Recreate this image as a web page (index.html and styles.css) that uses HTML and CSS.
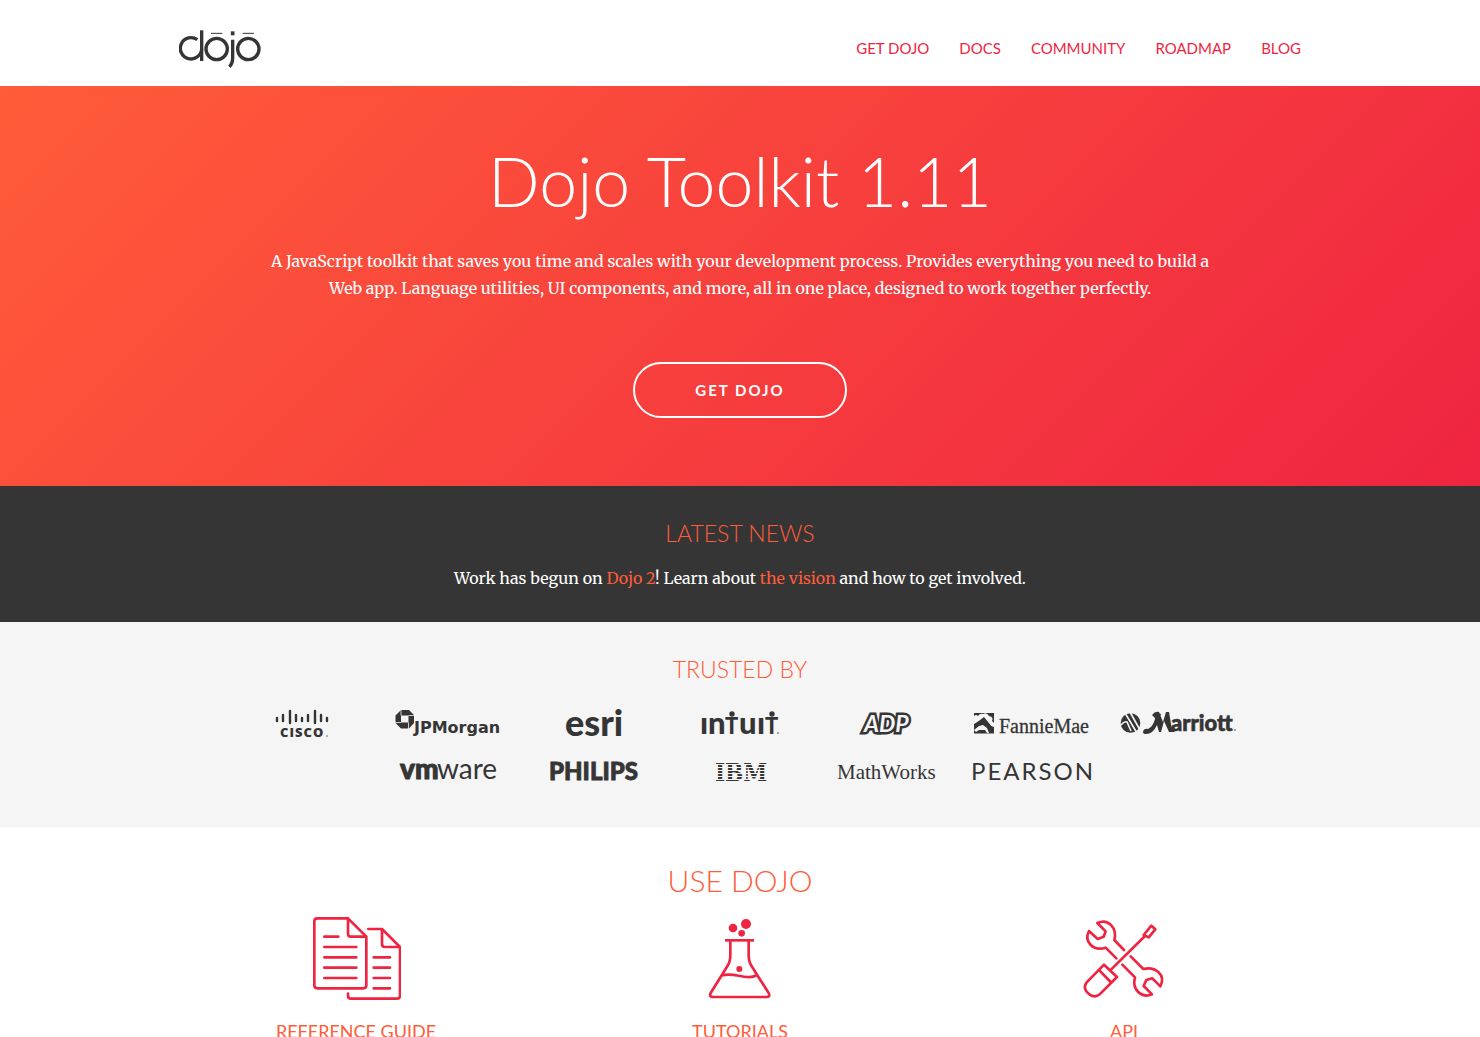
FILE: index.html
```html
<!DOCTYPE html>
<html lang="en">
<head>
    <meta charset="UTF-8">
    <meta name="viewport" content="width=device-width, initial-scale=1">
    <title>Dojo Toolkit</title>
    <link rel="stylesheet" href="styles.css">
</head>
<body>

    <header class="header">
        <div class="container header-inner">
            <a class="logo" href="#" aria-label="Dojo">
                <svg width="84" height="40" viewBox="57 42 252 120" fill="none" stroke="#353535" stroke-width="10">
                    <path d="M112 74A32 32 0 1 0 125 102"/>
                    <path d="M125 46V138"/>
                    <circle cx="170" cy="102" r="32"/>
                    <circle cx="265" cy="102" r="32"/>
                    <path d="M218 74V128Q218 146 208 155"/>
                    <path d="M218 49V61" stroke-width="11"/>
                    <path d="M153 55H187M248 55H282" stroke-width="3"/>
                </svg>
            </a>
            <nav class="nav">
                <a href="#">GET DOJO</a>
                <a href="#">DOCS</a>
                <a href="#">COMMUNITY</a>
                <a href="#">ROADMAP</a>
                <a href="#">BLOG</a>
            </nav>
        </div>
    </header>

    <section class="hero">
        <h1>Dojo Toolkit 1.11</h1>
        <p>A JavaScript toolkit that saves you time and scales with your development process. Provides everything you need to build a Web app. Language utilities, UI components, and more, all in one place, designed to work together perfectly.</p>
        <a class="btn" href="#">GET DOJO</a>
    </section>

    <section class="news">
        <h2>LATEST NEWS</h2>
        <p>Work has begun on <a href="#">Dojo 2</a>! Learn about <a href="#">the vision</a> and how to get involved.</p>
    </section>

    <section class="trusted">
        <h2>TRUSTED BY</h2>
        <div class="brands">
            <!-- cisco -->
            <svg class="brand" viewBox="0 0 146 48">
                <path d="M48 19V22M54 16V22M61 12V24M67 16V22M73 19V22M79 16V22M86 12V24M92 16V22M98 19V22" stroke="#353535" stroke-width="2.4" stroke-linecap="round"/>
                <text class="cisco" x="51" y="38">CISCO</text>
                <circle cx="98" cy="37" r=".7"/>
            </svg>
            <!-- jpmorgan -->
            <svg class="brand" viewBox="0 0 146 48">
                <path d="M26 11L20.500 16.500V24L26 29.500H34L39 24V16L34 11ZM26 16.500H33.500V23.500H26Z" fill-rule="evenodd"/>
                <path d="M26 10V16.500M40 16.500H33.500M33.500 30V23.500M20 23.500H26" stroke="#f5f5f5" stroke-width=".8"/>
                <text class="jpmorgan" x="39" y="34">JPMorgan</text>
            </svg>
            <!-- esri -->
            <svg class="brand" viewBox="0 0 146 48">
                <text class="esri" x="44" y="37">esri</text>
            </svg>
            <!-- intuit -->
            <svg class="brand" viewBox="0 0 146 48">
                <text class="intuit" y="35"><tspan x="33">ı</tspan><tspan x="41">n</tspan><tspan class="intuit-t" x="58">T</tspan><tspan x="72">u</tspan><tspan x="90">ı</tspan><tspan class="intuit-t" x="98">T</tspan></text>
                <circle cx="65" cy="15" r="2.700"/>
                <circle cx="105" cy="15" r="2.700"/>
                <circle cx="111" cy="34" r=".8"/>
            </svg>
            <!-- adp -->
            <svg class="brand" viewBox="0 0 146 48">
                <text class="adp" x="51" y="33">ADP</text>
            </svg>
            <!-- fannie mae -->
            <svg class="brand" viewBox="0 0 146 48">
                <rect x="15" y="14" width="20" height="20.500"/>
                <path d="M15 17Q17 15 19 17Q21 14 24 15Q28 13 30 17Q35 18 33 22L35 24V28L32 27L26 20L22 21L15 25Z" fill="#f5f5f5"/>
                <path d="M16 25L25 18L33 28L30 29L25 24L19 27Z"/>
                <path d="M15 31L20 27L24 26L28 29L30 34H28L26 31H20L17 33Z" fill="#f5f5f5"/>
                <text class="fannie" x="40" y="34">FannieMae</text>
            </svg>
            <!-- marriott -->
            <svg class="brand" viewBox="0 0 146 48">
                <circle cx="25.500" cy="24" r="9.800"/>
                <path d="M20 14L32 34M25 13L35 31M16 26Q19 22 22 23L26 32" fill="none" stroke="#f5f5f5" stroke-width="1.600"/>
                <path d="M38 33Q39 29 43 30Q47 28 49 23L52 14L56 15L52 26Q48 35 41 35Q38 35 38 33Z"/>
                <path d="M47 16Q50 12 54 13L58 23L61 13H64L67 31H71L69 33H64L59 22L56 33H54L50 19Z"/>
                <text class="marriott" x="66" y="32">arriott</text>
                <circle cx="130" cy="31" r=".8"/>
            </svg>
            <!-- vmware -->
            <svg class="brand" viewBox="0 0 146 48">
                <text class="vmware" y="32"><tspan class="vm" x="25">vm</tspan><tspan x="62">ware</tspan></text>
            </svg>
            <!-- philips -->
            <svg class="brand" viewBox="0 0 146 48">
                <text class="philips" x="28" y="33">PHILIPS</text>
            </svg>
            <!-- ibm -->
            <svg class="brand" viewBox="0 0 146 48">
                <text class="ibm" x="48" y="34">IBM</text>
                <path d="M46 17.500H100M46 20.500H100M46 23.500H100M46 26.500H100M46 29.500H100M46 32.500H100" stroke="#f5f5f5" stroke-width="1"/>
            </svg>
            <!-- mathworks -->
            <svg class="brand" viewBox="0 0 146 48">
                <text class="mathworks" x="24" y="32">MathWorks</text>
            </svg>
            <!-- pearson -->
            <svg class="brand" viewBox="0 0 146 48">
                <text class="pearson" x="12" y="33">PEARSON</text>
            </svg>
        </div>
    </section>

    <section class="use">
        <h2>USE DOJO</h2>
        <div class="container use-list">
            <a class="use-item" href="#">
                <svg class="use-icon" viewBox="123 48 270 252">
                    <path d="M234 55H142Q133 55 133 64V256Q133 265 142 265H280Q289 265 289 256V110ZM234 55V101Q234 110 243 110H289"/>
                    <path d="M163 110H205M163 141H259M163 172H259M163 203H259M163 234H259"/>
                    <path d="M295 87H336L390 141V287Q390 296 381 296H243Q234 296 234 287V281M336 87V132Q336 141 345 141H390"/>
                    <path d="M311 172H360M311 203H360M311 234H360M311 265H360"/>
                </svg>
                <h3>REFERENCE GUIDE</h3>
            </a>
            <a class="use-item" href="#">
                <svg class="use-icon" viewBox="45 48 270 252">
                    <g class="solid">
                        <circle cx="159" cy="84" r="13"/>
                        <circle cx="198" cy="72" r="15"/>
                        <circle cx="185" cy="100" r="10"/>
                        <circle cx="178" cy="207" r="9"/>
                    </g>
                    <path d="M139 121H218" stroke-linecap="square"/>
                    <path d="M151 126V165Q151 185 142 199L92 279Q86 291 99 291H259Q272 291 266 279L215 199Q206 185 206 165V126M128 226C155 218 180 231 203 231Q219 232 231 225"/>
                </svg>
                <h3>TUTORIALS</h3>
            </a>
            <a class="use-item" href="#">
                <svg class="use-icon" viewBox="57 48 270 252">
                    <path d="M192 150L163 120C172 84 145 54 112 69L137 94L131 110L113 117L87 93C71 124 99 155 137 143L169 175"/>
                    <path d="M212 169L250 207C286 198 319 225 301 259L277 235L259 240L251 258L276 283C244 297 215 267 225 232L187 194"/>
                    <path d="M251 105L274 77L286 88L266 112ZM255 108L153 209"/>
                    <path d="M132 194L171 231L119 283Q105 295 88 283Q66 265 80 247ZM118 211L152 246"/>
                </svg>
                <h3>API</h3>
            </a>
        </div>
    </section>

</body>
</html>
```
FILE: styles.css
```css
* {
    box-sizing: border-box;
}
html {
    overflow-x: hidden;
}
body {
    margin: 0;
    font-family: "Merriweather", "DejaVu Serif Condensed", "DejaVu Serif", serif;
    font-size: 16px;
    line-height: 27px;
    color: #353535;
    background: #fff;
}
a {
    color: #ff5c39;
    text-decoration: none;
}
h1, h2, h3, p {
    margin: 0;
}
h1, h2, h3 {
    font-family: "Lato", sans-serif;
    font-weight: 300;
}
h2 {
    font-size: 23px;
    line-height: 32px;
    color: #ff5c39;
}
.container {
    max-width: 1152px;
    margin: 0 auto;
}

/* header */
.header-inner {
    display: flex;
    align-items: center;
    justify-content: space-between;
    height: 86px;
    padding: 10px 15px 0;
}
.logo svg {
    display: block;
    margin-top: 2px;
}
.nav {
    display: flex;
    gap: 30px;
    font-family: "Lato", sans-serif;
    font-size: 15px;
}
.nav a {
    color: #ef2441;
}

/* hero */
.hero {
    display: flex;
    flex-direction: column;
    align-items: center;
    padding: 50px 20px 68px;
    text-align: center;
    color: #fff;
    background: linear-gradient(135deg, #ff5c39, #ef2441);
}
.hero h1 {
    font-size: 68px;
    line-height: 90px;
}
.hero p {
    max-width: 960px;
    margin-top: 22px;
}
.btn {
    margin-top: 60px;
    padding: 0 60px;
    border: 2px solid #fff;
    border-radius: 28px;
    font-family: "Lato", sans-serif;
    font-size: 15px;
    font-weight: 700;
    line-height: 52px;
    letter-spacing: 2px;
    color: #fff;
}

/* news */
.news {
    padding: 31px 20px 30px;
    text-align: center;
    color: #fff;
    background: #353535;
}
.news p {
    margin-top: 16px;
}

/* trusted by */
.trusted {
    padding: 31px 20px 32px;
    text-align: center;
    background: #f5f5f5;
}
.brands {
    display: flex;
    flex-wrap: wrap;
    justify-content: center;
    max-width: 1022px;
    margin: 14px auto 0;
}
.brand {
    width: 146px;
    height: 48px;
    fill: #353535;
    font-family: "Lato", sans-serif;
}
.cisco {
    font-family: "Open Sans", sans-serif;
    font-size: 13px;
    font-weight: 800;
    letter-spacing: 1px;
}
.jpmorgan {
    font-family: "DejaVu Sans", sans-serif;
    font-size: 16px;
    font-weight: 700;
}
.esri {
    font-size: 36px;
    font-weight: 900;
}
.intuit {
    font-size: 31px;
    font-weight: 900;
}
.intuit-t {
    font-size: 22px;
}
.adp {
    font-size: 23px;
    font-style: italic;
    font-weight: 700;
    fill: #f5f5f5;
    stroke: #353535;
    stroke-width: 5px;
    paint-order: stroke;
}
.fannie {
    font-family: "Liberation Serif", serif;
    font-size: 20px;
    stroke: #353535;
    stroke-width: .3px;
}
.marriott {
    font-size: 22px;
    font-weight: 900;
    stroke: #353535;
    stroke-width: .6px;
}
.vmware {
    font-size: 28px;
}
.vm {
    font-weight: 900;
    stroke: #353535;
    stroke-width: 1px;
}
.philips {
    font-size: 24px;
    font-weight: 900;
    stroke: #353535;
    stroke-width: .8px;
}
.ibm {
    font-family: "DejaVu Serif Condensed", "DejaVu Serif", serif;
    font-size: 24px;
    font-weight: 700;
}
.mathworks {
    font-family: "Liberation Serif", serif;
    font-size: 21px;
}
.pearson {
    font-size: 24px;
    letter-spacing: 2px;
}

/* use dojo */
.use {
    padding: 31px 0 32px;
    text-align: center;
}
.use h2 {
    font-size: 30px;
    line-height: 44px;
}
.use-list {
    display: grid;
    grid-template-columns: repeat(3, 1fr);
    margin-top: 14px;
}
.use-icon {
    display: block;
    width: 90px;
    height: 84px;
    margin: 0 auto;
    fill: none;
    stroke: #ef2441;
    stroke-width: 8;
    stroke-linecap: round;
    stroke-linejoin: round;
}
.use-icon .solid {
    fill: #ef2441;
    stroke: none;
}
.use-item h3 {
    margin-top: 18px;
    font-size: 18px;
    font-weight: 400;
    line-height: 27px;
}
```
